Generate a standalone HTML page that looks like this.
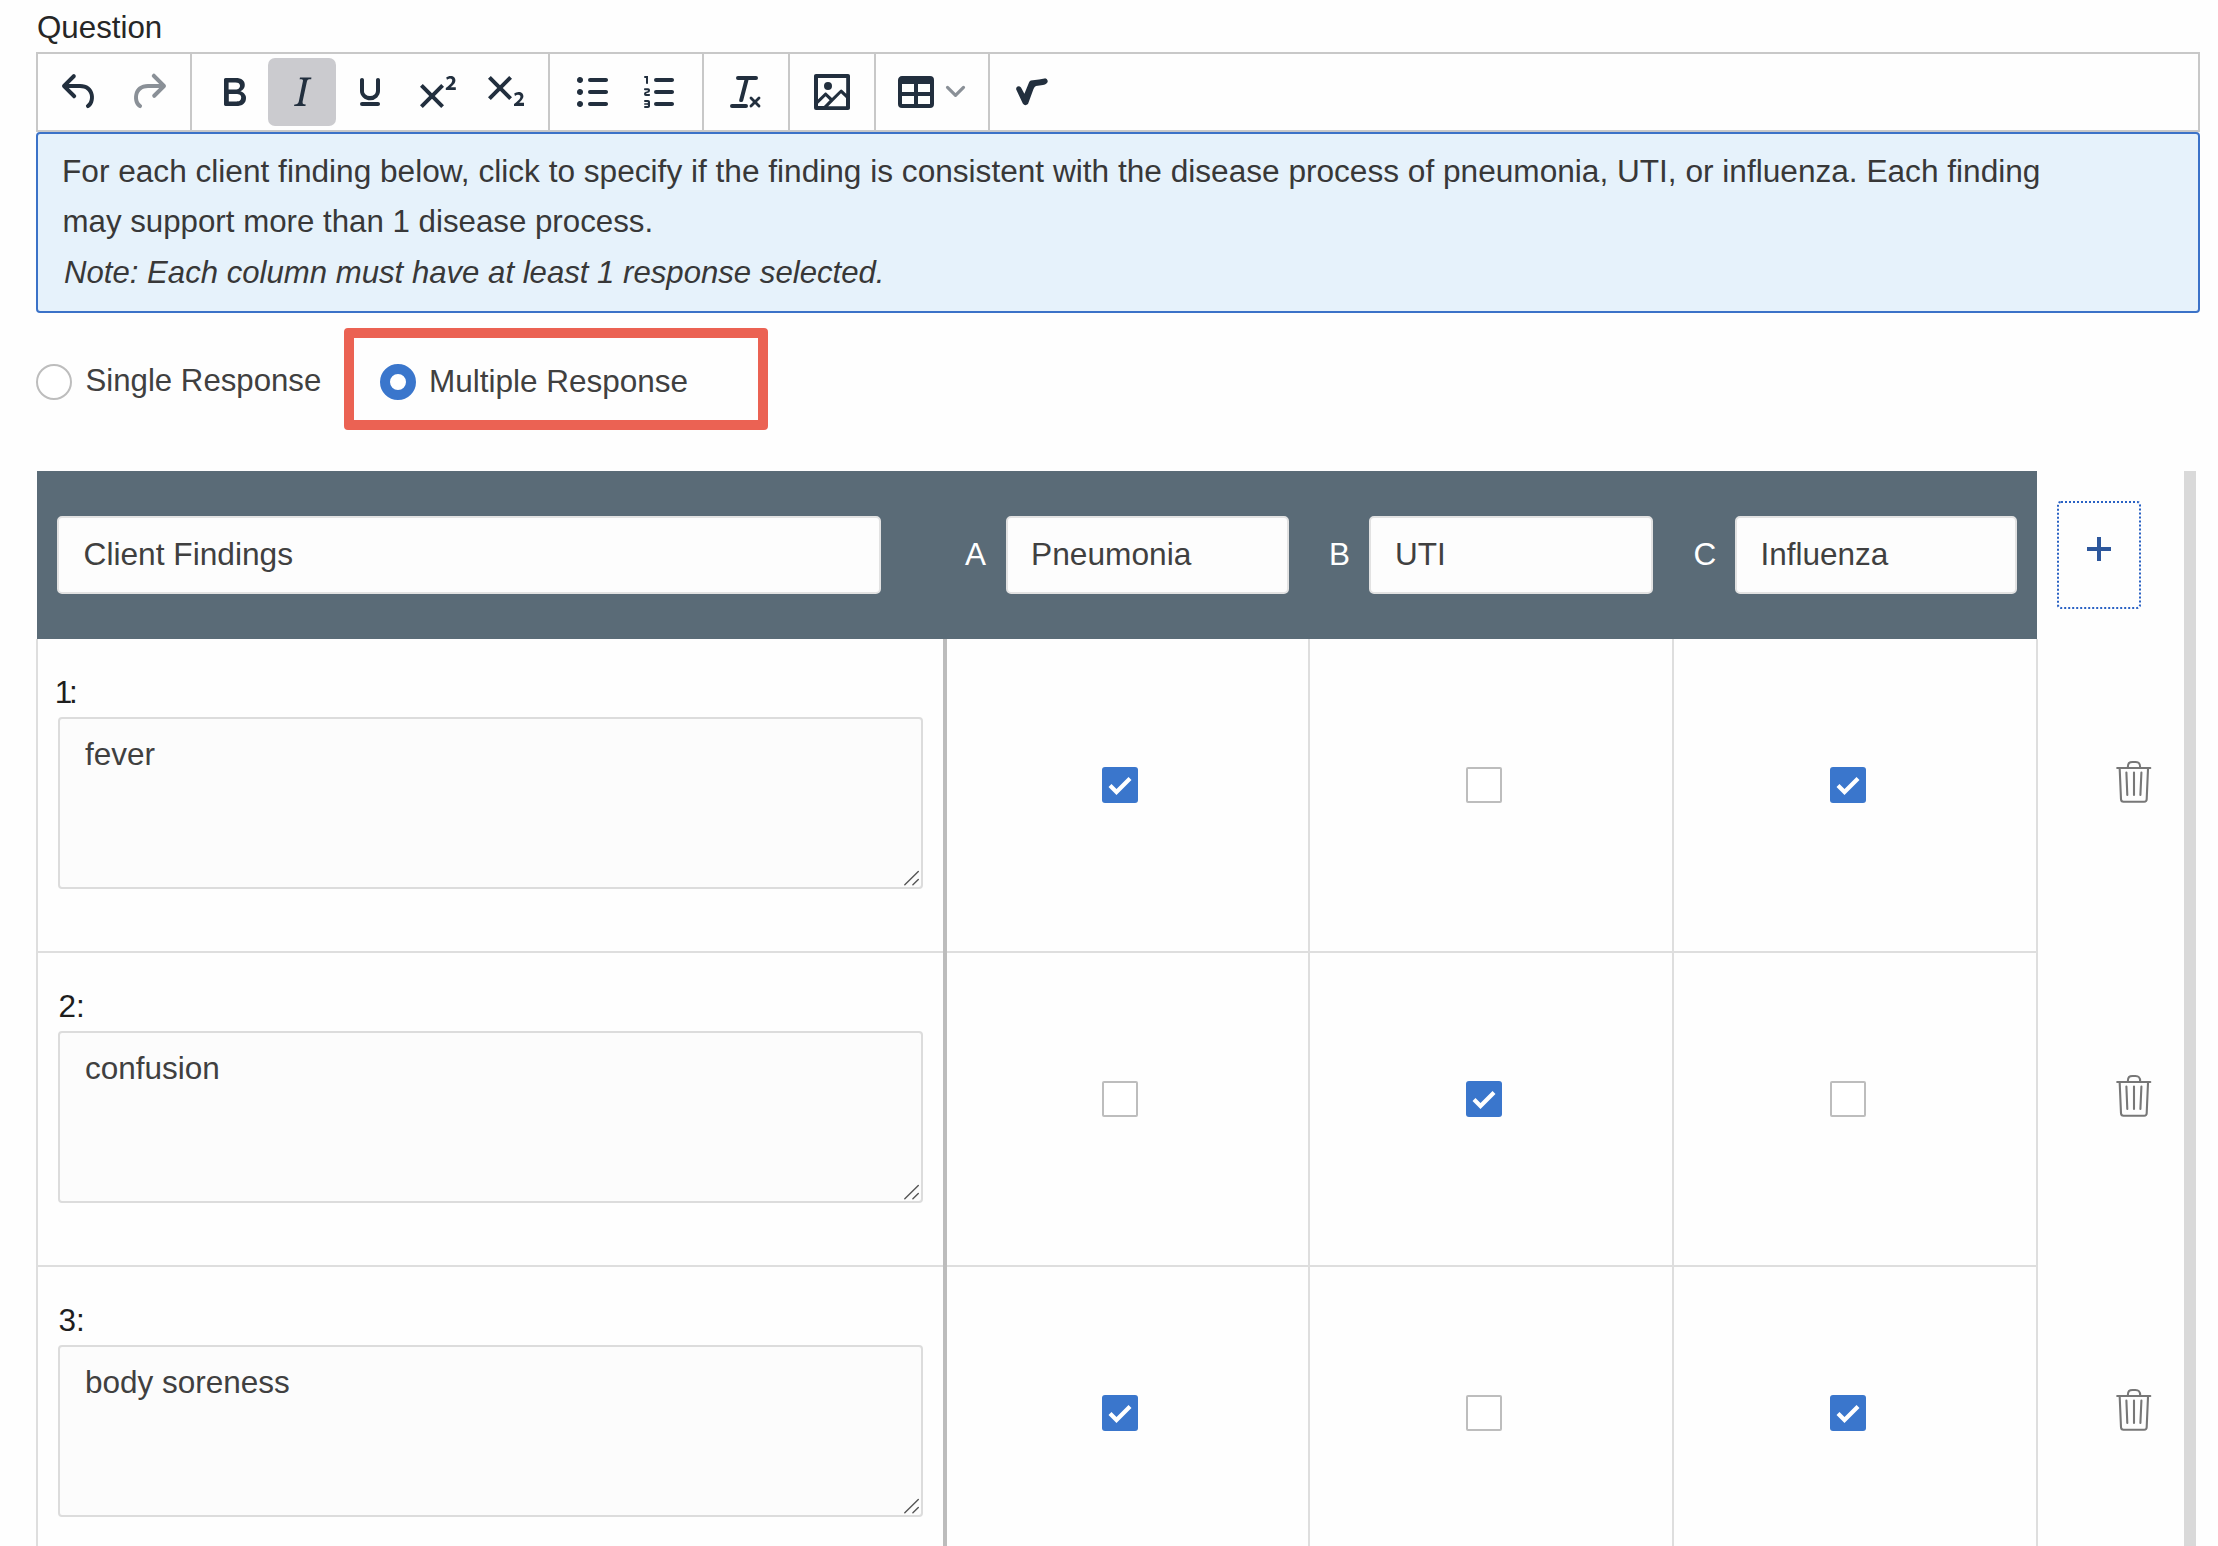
<!DOCTYPE html>
<html><head><meta charset="utf-8">
<style>
*{box-sizing:border-box;margin:0;padding:0}
html,body{width:2218px;height:1546px;overflow:hidden;background:#fefefe}
body{position:relative;font-family:"Liberation Sans",sans-serif;color:#333}
.a{position:absolute}
.t{position:absolute;line-height:40px;white-space:nowrap}
svg{position:absolute;overflow:visible}
.sep{position:absolute;top:54px;width:2px;height:76px;background:#c8c8c8}
.inp{position:absolute;background:#fdfdfd;border:2px solid #e2e2e2;border-radius:5px}
.vsep{position:absolute;width:2px;background:#dedede}
.hsep{position:absolute;height:2px;background:#dedede}
.cb{position:absolute;width:36px;height:36px;border-radius:3px}
.cb.on{background:#3a76cc}
.cb.off{border:2px solid #bdbdbd;border-radius:2px;background:#fff}
</style></head><body>

<div class="t" style="left:37px;top:7.65px;font-size:31.3px;color:#262626;">Question</div>
<div class="a" style="left:36px;top:52px;width:2164px;height:80px;border:2px solid #c8c8c8;background:#fefefe"></div>
<div class="sep" style="left:190px"></div>
<div class="sep" style="left:548px"></div>
<div class="sep" style="left:702px"></div>
<div class="sep" style="left:788px"></div>
<div class="sep" style="left:874px"></div>
<div class="sep" style="left:988px"></div>
<div class="a" style="left:268px;top:58px;width:68px;height:68px;border-radius:7px;background:#cbcbcf"></div>
<svg style="left:56px;top:68px" width="48" height="48" viewBox="0 0 24 24" fill="#222f3e"><path d="M6.4 8H12c3.7 0 6.2 2 6.8 5.1.6 2.7-.4 5.6-2.3 6.8a1 1 0 0 1-1-1.8c1.1-.6 1.8-2.7 1.4-4.6-.5-2.1-2.1-3.5-4.9-3.5H6.4l3.3 3.3a1 1 0 1 1-1.4 1.4l-5-5a1 1 0 0 1 0-1.4l5-5a1 1 0 0 1 1.4 1.4L6.4 8z"/></svg>
<svg style="left:124px;top:68px" width="48" height="48" viewBox="0 0 24 24" fill="#8a9097"><path d="M17.6 10H12c-2.8 0-4.4 1.4-4.9 3.5-.4 2 .3 4 1.4 4.6a1 1 0 1 1-1 1.8c-2-1.2-2.9-4.1-2.3-6.8.6-3 3-5.1 6.8-5.1h5.6l-3.3-3.3a1 1 0 1 1 1.4-1.4l5 5a1 1 0 0 1 0 1.4l-5 5a1 1 0 0 1-1.4-1.4l3.3-3.3z"/></svg>
<svg style="left:210px;top:68px" width="48" height="48" viewBox="0 0 24 24" fill="#222f3e"><path d="M7.8 19c-.3 0-.5 0-.6-.2l-.2-.5V5.7c0-.2 0-.4.2-.5l.6-.2h5c1.5 0 2.7.3 3.5 1 .7.6 1.1 1.4 1.1 2.5a3 3 0 0 1-.6 1.9c-.4.6-1 1-1.6 1.2.4.1.9.3 1.3.6s.8.7 1 1.2c.4.4.5 1 .5 1.6 0 1.3-.4 2.3-1.3 3-.8.7-2.1 1-3.8 1H7.8zm5-8.3c.6 0 1.2-.1 1.6-.5.4-.3.6-.7.6-1.3 0-1.1-.8-1.7-2.3-1.7H9.3v3.5h3.4zm.5 6c.7 0 1.3-.1 1.700-.4.4-.4.6-.9.6-1.5s-.2-1-.7-1.4c-.4-.3-1-.4-2-.4H9.4v3.8h4z" fill-rule="evenodd"/></svg>
<svg style="left:278px;top:68px" width="48" height="48" viewBox="0 0 24 24" fill="#222f3e"><path d="M16.7 4.7l-.1.9h-.3c-.6 0-1 0-1.4.3-.3.3-.4.6-.5 1.1l-2.1 9.8v.6c0 .5.4.8 1.4.8h.2l-.2.8H8l.2-.8h.2c1.1 0 1.8-.5 2-1.5l2-9.8.1-.5c0-.6-.4-.8-1.4-.8h-.3l.2-.9h5.8z" fill-rule="evenodd"/></svg>
<svg style="left:346px;top:68px" width="48" height="48" viewBox="0 0 24 24" fill="#222f3e"><path d="M16 5c.6 0 1 .4 1 1v5.5a4 4 0 0 1-.4 1.8l-1 1.4a5.3 5.3 0 0 1-5.5 1 5 5 0 0 1-1.6-1c-.5-.4-.8-.9-1.1-1.4a4 4 0 0 1-.4-1.8V6c0-.6.4-1 1-1s1 .4 1 1v5.5c0 .3 0 .6.2 1l.6.7a3.3 3.3 0 0 0 2.2.8 3.4 3.4 0 0 0 2.2-.8c.3-.2.4-.5.6-.8l.2-.9V6c0-.6.4-1 1-1zM8 17h8c.6 0 1 .4 1 1s-.4 1-1 1H8a1 1 0 0 1 0-2z" fill-rule="evenodd"/></svg>
<svg style="left:414px;top:68px" width="48" height="48" viewBox="0 0 24 24" fill="#222f3e"><path d="M15 9.4L10.4 14l4.6 4.6-1.4 1.4L9 15.4 4.4 20 3 18.6 7.6 14 3 9.4 4.4 8 9 12.6 13.6 8 15 9.4zm5.9 1.6h-5v-1l1-.8 1.7-1.6c.3-.5.5-.9.5-1.300 0-.3 0-.5-.2-.7-.2-.2-.5-.3-.9-.3l-.8.2-.7.4-.4-1.2c.2-.2.5-.4 1-.5.3-.2.8-.2 1.2-.2.8 0 1.400.2 1.8.6.4.4.6 1 .6 1.6 0 .5-.2 1-.5 1.5l-1.3 1.4-.6.5h2.6V11z"/></svg>
<svg style="left:482px;top:68px" width="48" height="48" viewBox="0 0 24 24" fill="#222f3e"><path d="M10.4 10l4.6 4.6-1.4 1.4L9 11.4 4.4 16 3 14.6 7.6 10 3 5.4 4.4 4 9 8.6 13.6 4 15 5.4 10.4 10zM21 19h-5v-1l1-.8 1.7-1.6c.3-.4.5-.8.5-1.2 0-.3 0-.6-.2-.7-.2-.2-.5-.3-1-.3l-.7.1-.8.5-.4-1.2c.3-.3.6-.4 1-.6l1.2-.2c.8 0 1.4.2 1.8.6.4.4.6.9.6 1.6 0 .4-.2.9-.5 1.3-.2.5-.6.9-1 1.3l-.6.6H21V19z"/></svg>
<svg style="left:568px;top:68px" width="48" height="48" viewBox="0 0 24 24" fill="#222f3e"><path d="M11 5h8c.6 0 1 .4 1 1s-.4 1-1 1h-8a1 1 0 0 1 0-2zm0 6h8c.6 0 1 .4 1 1s-.4 1-1 1h-8a1 1 0 0 1 0-2zm0 6h8c.6 0 1 .4 1 1s-.4 1-1 1h-8a1 1 0 0 1 0-2zM4.5 6c0-.4.1-.8.4-1 .3-.4.7-.5 1.1-.5.4 0 .8.1 1 .4.4.3.5.7.5 1.1 0 .4-.1.8-.4 1-.3.4-.7.5-1.1.5-.4 0-.8-.1-1-.4-.4-.3-.5-.7-.5-1.1zm0 6c0-.4.1-.8.4-1 .3-.4.7-.5 1.1-.5.4 0 .8.1 1 .4.4.3.5.7.5 1.1 0 .4-.1.8-.4 1-.3.4-.7.5-1.1.5-.4 0-.8-.1-1-.4-.4-.3-.5-.7-.5-1.1zm0 6c0-.4.1-.8.4-1 .3-.4.7-.5 1.1-.5.4 0 .8.1 1 .4.4.3.5.7.5 1.1 0 .4-.1.8-.4 1-.3.4-.7.5-1.1.5-.4 0-.8-.1-1-.4-.4-.3-.5-.7-.5-1.1z" fill-rule="evenodd"/></svg>
<svg style="left:636px;top:68px" width="48" height="48" viewBox="0 0 24 24" fill="#222f3e"><path d="M10 17h8c.6 0 1 .4 1 1s-.4 1-1 1h-8a1 1 0 0 1 0-2zm0-6h8c.6 0 1 .4 1 1s-.4 1-1 1h-8a1 1 0 0 1 0-2zm0-6h8c.6 0 1 .4 1 1s-.4 1-1 1h-8a1 1 0 1 1 0-2zM6 4v3.5c0 .3-.2.5-.5.5a.5.5 0 0 1-.5-.5V5h-.5a.5.5 0 0 1 0-1H6zm-1 8.8l.2.2h1.3c.3 0 .5.2.5.5s-.2.5-.5.5H4.9a1 1 0 0 1-.9-1V13c0-.4.3-.8.6-1l1.2-.4.2-.3a.2.2 0 0 0-.2-.2H4.5a.5.5 0 0 1-.5-.5c0-.3.2-.5.5-.5h1.6c.5 0 .9.4.9 1v.1c0 .4-.3.8-.6 1l-1.200.4-.2.3zM7 17v2c0 .6-.4 1-1 1H4.5a.5.5 0 0 1 0-1h1.2c.2 0 .3-.1.3-.3 0-.2-.1-.3-.3-.3H4.4a.4.4 0 1 1 0-.8h1.300c.2 0 .3-.1.3-.3 0-.2-.1-.3-.3-.3H4.5a.5.5 0 1 1 0-1H6c.6 0 1 .4 1 1z" fill-rule="evenodd"/></svg>
<svg style="left:722px;top:68px" width="48" height="48" viewBox="0 0 24 24" fill="#222f3e"><path d="M13.2 6a1 1 0 0 1 0 .2l-2.6 10a1 1 0 0 1-1 .8h-.2a.8.8 0 0 1-.8-1l2.6-10H8a1 1 0 1 1 0-2h9a1 1 0 0 1 0 2h-3.8zM5 18h7a1 1 0 0 1 0 2H5a1 1 0 0 1 0-2zm13 1.5L16.5 18 15 19.5a.7.7 0 0 1-1-1l1.5-1.5-1.5-1.5a.7.7 0 0 1 1-1l1.5 1.5 1.5-1.5a.7.7 0 0 1 1 1L17.5 17l1.5 1.5a.7.7 0 0 1-1 1z" fill-rule="evenodd"/></svg>
<svg style="left:808px;top:68px" width="48" height="48" viewBox="0 0 24 24" fill="#222f3e"><path d="M5 15.7l3.3-3.2c.3-.3.7-.3 1 0L12 15l4.1-4c.3-.4.8-.4 1 0l2 1.9V5H5v10.7zM5 18V19h3l2.8-2.9-2-2L5 17.9zm14-3l-2.5-2.4-6.4 6.5H19v-4zM4 3h16c.6 0 1 .4 1 1v16c0 .6-.4 1-1 1H4a1 1 0 0 1-1-1V4c0-.6.4-1 1-1zm6 8a2 2 0 1 0 0-4 2 2 0 0 0 0 4z"/></svg>
<svg style="left:892px;top:68px" width="48" height="48" viewBox="0 0 24 24" fill="#222f3e"><path d="M19 4a2 2 0 0 1 2 2v12a2 2 0 0 1-2 2H5a2 2 0 0 1-2-2V6c0-1.1.9-2 2-2h14zM5 14v4h6v-4H5zm14 0h-6v4h6v-4zm0-6h-6v4h6V8zM5 12h6V8H5v4z" fill-rule="evenodd"/></svg>
<svg style="left:945px;top:85px" width="21" height="14" viewBox="0 0 10 7"><path d="M1 1.2 L5 5.2 L9 1.2" stroke="#8a9097" stroke-width="1.6" fill="none" stroke-linecap="round" stroke-linejoin="round"/></svg>
<svg style="left:1000px;top:60px" width="64" height="64" viewBox="0 0 64 64"><path d="M16.2 29.5 L22.8 43.5 Q25 46.5 28 44 L33.5 29 Q34.5 26.3 36 26 L43 25 Q47.5 24 47.8 21 Q47 18 44.5 18.4 L39 19.5 L30.8 20.4 Q29.6 21 29 22.5 L24.4 33.8 L21 27.5 Q19.5 25.8 17.5 26.5 Q15.8 27.5 16.2 29.5 Z" fill="#222f3e"/></svg>
<div class="a" style="left:36px;top:132px;width:2164px;height:181px;border:2px solid #3b72c8;border-radius:4px;background:#e6f2fb"></div>
<div class="t" style="left:62px;top:151.04px;font-size:31.62px;color:#383838;">For each client finding below, click to specify if the finding is consistent with the disease process of pneumonia, UTI, or influenza. Each finding</div>
<div class="t" style="left:62.5px;top:202.17px;font-size:31.25px;color:#383838;">may support more than 1 disease process.</div>
<div class="t" style="left:64px;top:253.21px;font-size:31.15px;color:#383838;font-style:italic;">Note: Each column must have at least 1 response selected.</div>
<div class="a" style="left:36px;top:364px;width:36px;height:36px;border-radius:50%;border:2px solid #bdbdbd;background:#fff"></div>
<div class="t" style="left:85.5px;top:361.19px;font-size:31.2px;color:#404040;">Single Response</div>
<div class="a" style="left:344px;top:328px;width:424px;height:102px;border:10px solid #eb6253;border-radius:4px"></div>
<div class="a" style="left:380px;top:364px;width:36px;height:36px;border-radius:50%;border:10px solid #3a76cc;background:#fff"></div>
<div class="t" style="left:429px;top:361.09px;font-size:31.5px;color:#404040;">Multiple Response</div>
<div class="a" style="left:37px;top:471px;width:2000px;height:168px;background:#5a6b77"></div>
<div class="inp" style="left:57px;top:516px;width:824px;height:78px"></div>
<div class="t" style="left:83.5px;top:534.02px;font-size:31.7px;color:#404040;">Client Findings</div>
<div class="t" style="left:965px;top:534.09px;font-size:31.5px;color:#fff;">A</div>
<div class="inp" style="left:1006px;top:516px;width:283px;height:78px"></div>
<div class="t" style="left:1031px;top:534.02px;font-size:31.7px;color:#404040;">Pneumonia</div>
<div class="t" style="left:1329px;top:534.09px;font-size:31.5px;color:#fff;">B</div>
<div class="inp" style="left:1369px;top:516px;width:284px;height:78px"></div>
<div class="t" style="left:1395px;top:534.09px;font-size:31.5px;color:#404040;">UTI</div>
<div class="t" style="left:1693.5px;top:534.09px;font-size:31.5px;color:#fff;">C</div>
<div class="inp" style="left:1735px;top:516px;width:282px;height:78px"></div>
<div class="t" style="left:1760.5px;top:534.09px;font-size:31.5px;color:#404040;">Influenza</div>
<div class="a" style="left:2057px;top:501px;width:84px;height:108px;border:2px dotted #2a62c4;border-radius:4px"></div>
<div class="a" style="left:2087px;top:547px;width:24px;height:4px;background:#2d579c"></div>
<div class="a" style="left:2097px;top:537px;width:4px;height:24px;background:#2d579c"></div>
<div class="a" style="left:2184px;top:471px;width:12px;height:1075px;background:#d9d9d9"></div>
<div class="hsep" style="left:38px;top:951px;width:1999px"></div>
<div class="hsep" style="left:38px;top:1265px;width:1999px"></div>
<div class="vsep" style="left:36px;top:639px;height:907px"></div>
<div class="a" style="left:943px;top:639px;width:4px;height:907px;background:#bcbcbc"></div>
<div class="vsep" style="left:1308px;top:639px;height:907px"></div>
<div class="vsep" style="left:1672px;top:639px;height:907px"></div>
<div class="vsep" style="left:2036px;top:639px;height:907px"></div>
<div class="t" style="left:54.7px;top:672.09px;font-size:31.5px;color:#1e1e1e;">1</div>
<div class="t" style="left:69px;top:672.09px;font-size:31.5px;color:#1e1e1e;">:</div>
<div class="a" style="left:58px;top:717px;width:865px;height:172px;border:2px solid #dcdcdc;border-radius:4px;background:#fcfcfc"></div>
<div class="t" style="left:85px;top:734.09px;font-size:31.5px;color:#404040;">fever</div>
<svg style="left:900px;top:866px" width="20" height="20"><path d="M4.8 18.8 L18.3 5.6 M12.9 18.8 L18.3 13.5" stroke="#555" stroke-width="1.4" stroke-linecap="round"/></svg>
<div class="cb on" style="left:1102px;top:767px"><svg style="left:0;top:0" width="36" height="36"><path d="M8 18.5 L14.5 25 L28 11.5" stroke="#fff" stroke-width="4.2" fill="none"/></svg></div>
<div class="cb off" style="left:1466px;top:767px"></div>
<div class="cb on" style="left:1830px;top:767px"><svg style="left:0;top:0" width="36" height="36"><path d="M8 18.5 L14.5 25 L28 11.5" stroke="#fff" stroke-width="4.2" fill="none"/></svg></div>
<svg style="left:2114px;top:759px" width="40" height="46" viewBox="0 0 40 46"><g fill="none" stroke="#777" stroke-width="2.1" stroke-linecap="round" stroke-linejoin="round"><path d="M3.2 9 H36.3"/><path d="M13.8 8.5 C13.8 4 15.5 3 18.5 3 H21.5 C24.5 3 26.2 4 26.2 8.5"/><path d="M5.7 10 L7 40.3 C7.1 42 8 42.8 9.5 42.8 H30.2 C31.7 42.8 32.6 42 32.7 40.3 L34 10"/><path d="M12.4 13.5 L13.3 36 M20 13.5 V36 M27.4 13.5 L26.4 36"/></g></svg>
<div class="t" style="left:58.5px;top:986.09px;font-size:31.5px;color:#1e1e1e;">2:</div>
<div class="a" style="left:58px;top:1031px;width:865px;height:172px;border:2px solid #dcdcdc;border-radius:4px;background:#fcfcfc"></div>
<div class="t" style="left:85px;top:1048.09px;font-size:31.5px;color:#404040;">confusion</div>
<svg style="left:900px;top:1180px" width="20" height="20"><path d="M4.8 18.8 L18.3 5.6 M12.9 18.8 L18.3 13.5" stroke="#555" stroke-width="1.4" stroke-linecap="round"/></svg>
<div class="cb off" style="left:1102px;top:1081px"></div>
<div class="cb on" style="left:1466px;top:1081px"><svg style="left:0;top:0" width="36" height="36"><path d="M8 18.5 L14.5 25 L28 11.5" stroke="#fff" stroke-width="4.2" fill="none"/></svg></div>
<div class="cb off" style="left:1830px;top:1081px"></div>
<svg style="left:2114px;top:1073px" width="40" height="46" viewBox="0 0 40 46"><g fill="none" stroke="#777" stroke-width="2.1" stroke-linecap="round" stroke-linejoin="round"><path d="M3.2 9 H36.3"/><path d="M13.8 8.5 C13.8 4 15.5 3 18.5 3 H21.5 C24.5 3 26.2 4 26.2 8.5"/><path d="M5.7 10 L7 40.3 C7.1 42 8 42.8 9.5 42.8 H30.2 C31.7 42.8 32.6 42 32.7 40.3 L34 10"/><path d="M12.4 13.5 L13.3 36 M20 13.5 V36 M27.4 13.5 L26.4 36"/></g></svg>
<div class="t" style="left:58.5px;top:1300.09px;font-size:31.5px;color:#1e1e1e;">3:</div>
<div class="a" style="left:58px;top:1345px;width:865px;height:172px;border:2px solid #dcdcdc;border-radius:4px;background:#fcfcfc"></div>
<div class="t" style="left:85px;top:1362.09px;font-size:31.5px;color:#404040;">body soreness</div>
<svg style="left:900px;top:1494px" width="20" height="20"><path d="M4.8 18.8 L18.3 5.6 M12.9 18.8 L18.3 13.5" stroke="#555" stroke-width="1.4" stroke-linecap="round"/></svg>
<div class="cb on" style="left:1102px;top:1395px"><svg style="left:0;top:0" width="36" height="36"><path d="M8 18.5 L14.5 25 L28 11.5" stroke="#fff" stroke-width="4.2" fill="none"/></svg></div>
<div class="cb off" style="left:1466px;top:1395px"></div>
<div class="cb on" style="left:1830px;top:1395px"><svg style="left:0;top:0" width="36" height="36"><path d="M8 18.5 L14.5 25 L28 11.5" stroke="#fff" stroke-width="4.2" fill="none"/></svg></div>
<svg style="left:2114px;top:1387px" width="40" height="46" viewBox="0 0 40 46"><g fill="none" stroke="#777" stroke-width="2.1" stroke-linecap="round" stroke-linejoin="round"><path d="M3.2 9 H36.3"/><path d="M13.8 8.5 C13.8 4 15.5 3 18.5 3 H21.5 C24.5 3 26.2 4 26.2 8.5"/><path d="M5.7 10 L7 40.3 C7.1 42 8 42.8 9.5 42.8 H30.2 C31.7 42.8 32.6 42 32.7 40.3 L34 10"/><path d="M12.4 13.5 L13.3 36 M20 13.5 V36 M27.4 13.5 L26.4 36"/></g></svg>
</body></html>
